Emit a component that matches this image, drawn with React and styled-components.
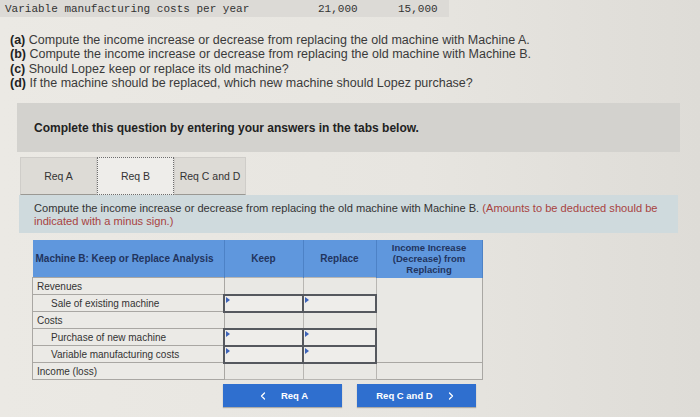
import styled, { createGlobalStyle } from "styled-components"
import { ChevronLeft, ChevronRight } from "lucide-react"

const Global = createGlobalStyle`
    body {
        margin: 0;
        background: #e6e4df;
    }
`

const Page = styled.div`
    width: 700px;
    height: 417px;
    overflow: hidden;
    background: linear-gradient(90deg, #ebe9e4 0%, #e7e5e0 60%, #dedcd7 100%);
    font-family: "Liberation Sans", Arial, sans-serif;
    color: #2b2b2b;
`

const DataRow = styled.div`
    display: flex;
    box-sizing: border-box;
    width: 449px;
    height: 17px;
    align-items: center;
    padding-left: 5px;
    background: #dcdad6;
    font-family: "Liberation Mono", "DejaVu Sans Mono", monospace;
    font-size: 11px;
    color: #333;
`

const DataLabel = styled.span`
    flex: none;
    width: 313px;
`

const DataValue = styled.span`
    flex: none;
    width: 80px;
`

const Questions = styled.div`
    margin-top: 16px;
    padding-left: 10px;
    font-size: 12.5px;
    line-height: 14.3px;
    color: #3a3a3a;
`

const Letter = styled.b`
    font-weight: bold;
    color: #222;
`

const PromptBox = styled.div`
    margin: 13px 20px 0 17px;
    height: 49px;
    display: flex;
    align-items: center;
    padding-left: 17px;
    background: #d3d2ce;
    font-size: 12px;
    font-weight: bold;
    color: #222;
`

const Tabs = styled.div`
    display: flex;
    margin: 5px 0 0 20px;
    height: 38px;
`

const Tab = styled.div`
    width: ${p => p.$w}px;
    display: flex;
    align-items: center;
    justify-content: center;
    font-size: 10.5px;
    color: #333;
    background: ${p => (p.$active ? "#eeedea" : "#dddbd6")};
    border: ${p => (p.$active ? "1px dotted #6d6d6d" : "1px solid #cfcdc9")};
    border-bottom: ${p => (p.$active ? "1px dotted #6d6d6d" : "1px solid #9a9893")};
    box-sizing: border-box;
`

const Instructions = styled.div`
    margin: 0 22px 0 19px;
    height: 38px;
    box-sizing: border-box;
    padding: 7px 4px 0 15px;
    background: #cfdadd;
    font-size: 11.1px;
    line-height: 13px;
    color: #333;
`

const Red = styled.span`
    color: #a8433f;
`

const Table = styled.table`
    margin: 7px 0 0 32px;
    border-collapse: collapse;
    font-size: 10px;
    color: #333;
`

const Head = styled.th`
    height: 37px;
    padding: 0 3px;
    background: #5f97dd;
    color: #22345d;
    font-weight: bold;
    font-size: ${p => (p.$small ? "9.5px" : "10px")};
    line-height: 11px;
    text-align: ${p => (p.$left ? "left" : "center")};
    border-right: 1px solid #4d82c6;
    width: ${p => p.$w}px;
`

const Row = styled.tr`
    height: 17px;
`

const Label = styled.td`
    height: 14px;
    padding: 0 0 0 ${p => (p.$indent ? "18px" : "4px")};
    border: 1px solid #a9a7a3;
    background: #ebeae6;
    white-space: nowrap;
`

const Cell = styled.td`
    position: relative;
    height: 13px;
    padding: 0;
    background: ${p => (p.$input ? "#eeedea" : "#e9e8e4")};
    border: ${p => (p.$input ? "2px solid #55585e" : "1px solid #b8b6b2")};
`

const Marker = styled.span`
    position: absolute;
    left: 1px;
    top: 1px;
    width: 0;
    height: 0;
    border-top: 3px solid transparent;
    border-bottom: 3px solid transparent;
    border-left: 4px solid #3d63b8;
`

const Blank = styled.td`
    padding: 0;
    background: #e9e8e4;
    border-right: 1px solid #a9a7a3;
    border-bottom: 1px solid #a9a7a3;
`

const Buttons = styled.div`
    display: flex;
    gap: 15px;
    margin: 4px 0 0 223px;
`

const NavButton = styled.button`
    width: 119px;
    height: 23px;
    padding: 0;
    display: flex;
    align-items: center;
    justify-content: center;
    gap: 12px;
    border: none;
    background: #2f6fcf;
    color: #fff;
    font-family: "Liberation Sans", Arial, sans-serif;
    font-weight: bold;
    font-size: 9.5px;
    box-shadow: 0 1px 1px rgba(0, 0, 0, 0.25);
`

function InputCell() {
    return (
        <Cell $input>
            <Marker />
        </Cell>
    )
}

export default function App() {
    return (
        <Page>
            <Global />
            <DataRow>
                <DataLabel>Variable manufacturing costs per year</DataLabel>
                <DataValue>21,000</DataValue>
                <DataValue>15,000</DataValue>
            </DataRow>

            <Questions>
                <div><Letter>(a)</Letter> Compute the income increase or decrease from replacing the old machine with Machine A.</div>
                <div><Letter>(b)</Letter> Compute the income increase or decrease from replacing the old machine with Machine B.</div>
                <div><Letter>(c)</Letter> Should Lopez keep or replace its old machine?</div>
                <div><Letter>(d)</Letter> If the machine should be replaced, which new machine should Lopez purchase?</div>
            </Questions>

            <PromptBox>Complete this question by entering your answers in the tabs below.</PromptBox>

            <Tabs>
                <Tab $w={77}>Req A</Tab>
                <Tab $w={77} $active>Req B</Tab>
                <Tab $w={72}>Req C and D</Tab>
            </Tabs>

            <Instructions>
                Compute the income increase or decrease from replacing the old machine with Machine B.{" "}
                <Red>(Amounts to be deducted should be indicated with a minus sign.)</Red>
            </Instructions>

            <Table>
                <thead>
                    <tr>
                        <Head $left $w={185}>Machine B: Keep or Replace Analysis</Head>
                        <Head $w={72}>Keep</Head>
                        <Head $w={66}>Replace</Head>
                        <Head $w={99} $small>Income Increase (Decrease) from Replacing</Head>
                    </tr>
                </thead>
                <tbody>
                    <Row>
                        <Label>Revenues</Label>
                        <Cell />
                        <Cell />
                        <Blank rowSpan={5} />
                    </Row>
                    <Row>
                        <Label $indent>Sale of existing machine</Label>
                        <InputCell />
                        <InputCell />
                    </Row>
                    <Row>
                        <Label>Costs</Label>
                        <Cell />
                        <Cell />
                    </Row>
                    <Row>
                        <Label $indent>Purchase of new machine</Label>
                        <InputCell />
                        <InputCell />
                    </Row>
                    <Row>
                        <Label $indent>Variable manufacturing costs</Label>
                        <InputCell />
                        <InputCell />
                    </Row>
                    <Row>
                        <Label>Income (loss)</Label>
                        <Cell />
                        <Cell />
                        <Blank />
                    </Row>
                </tbody>
            </Table>

            <Buttons>
                <NavButton><ChevronLeft size={12} strokeWidth={2.5} />Req A</NavButton>
                <NavButton>Req C and D<ChevronRight size={12} strokeWidth={2.5} /></NavButton>
            </Buttons>
        </Page>
    )
}
